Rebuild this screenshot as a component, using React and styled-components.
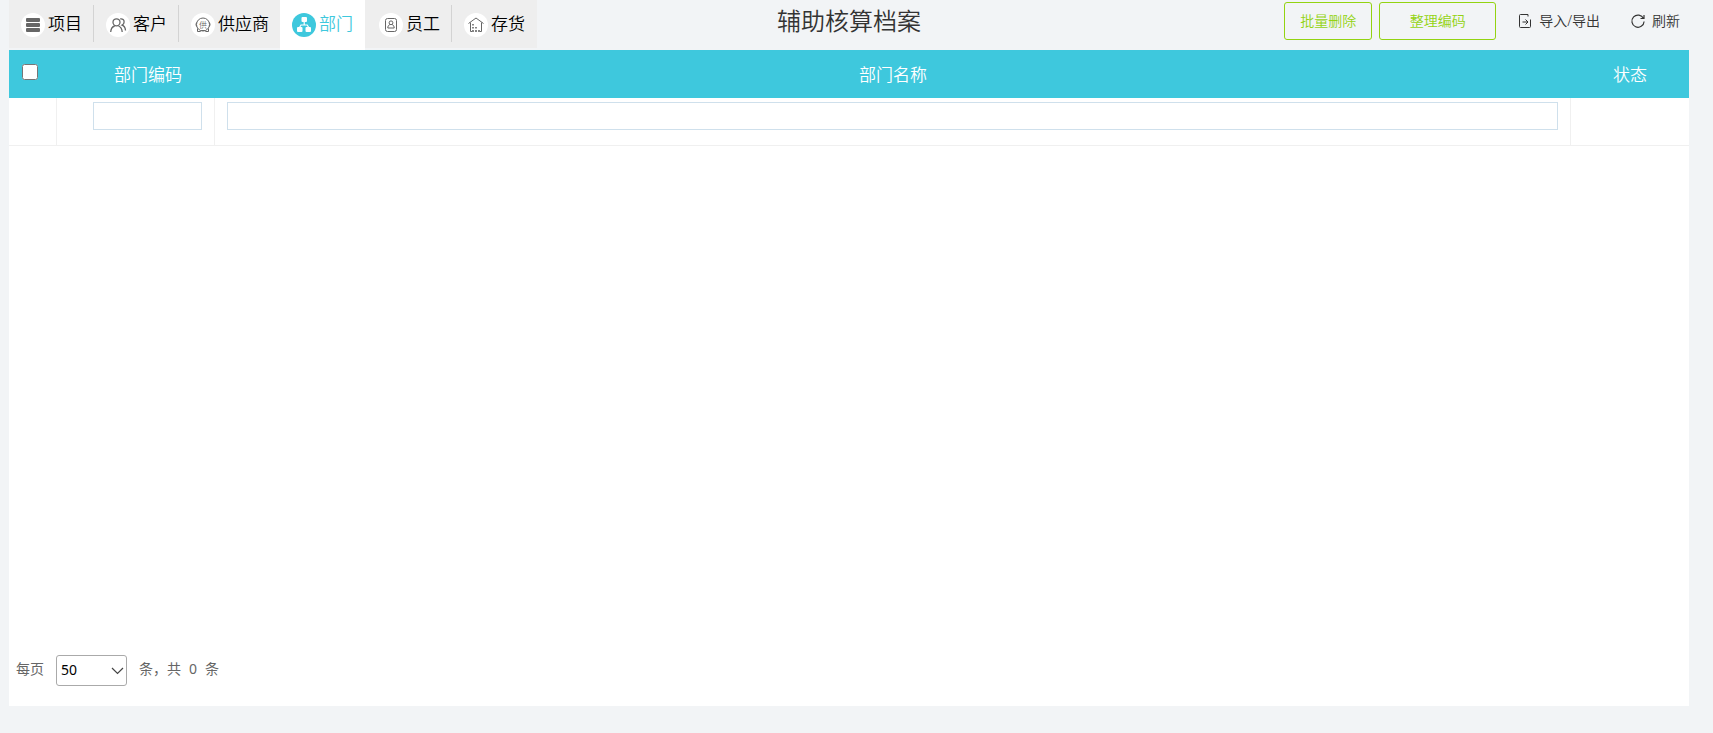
import React, { useState } from "react";
import styled, { createGlobalStyle } from "styled-components";

// Color scheme
const primaryColor = "#3ec8dd";
const accentColor = "#93d311";
const pageColor = "#f2f4f6";
const tabColor = "#eeeeee";
const iconColor = "#666666";

const GlobalStyle = createGlobalStyle`
  * {
    box-sizing: border-box;
  }

  body {
    margin: 0;
    background-color: ${pageColor};
    font-family: "Noto Sans", "Noto Sans CJK SC", sans-serif;
    font-size: 14px;
    font-weight: 350;
    color: #333;
  }

  button, input, select {
    font-family: inherit;
    font-weight: inherit;
  }
`;

// Styled Components
const Page = styled.main`
  display: flex;
  flex-direction: column;
  min-height: 100vh;
  padding: 0 24px 27px 9px;
`;

const Header = styled.header`
  display: grid;
  grid-template-columns: 1fr auto 1fr;
  height: 50px;
`;

const Tabs = styled.div`
  display: flex;
  justify-self: start;
  height: 48px;
  background-color: ${tabColor};
`;

const Tab = styled.button`
  display: flex;
  align-items: center;
  gap: 3px;
  height: ${({ $active }) => ($active ? "50px" : "48px")};
  margin: ${({ $active }) => ($active ? "0 2px 0 -1px" : "0")};
  padding: ${({ $active }) => ($active ? "0 0 2px 12px" : "0 0 0 12px")};
  border: 0;
  background-color: ${({ $active }) => ($active ? "#fff" : tabColor)};
  color: ${({ $active }) => ($active ? primaryColor : "#000")};
  font-size: 17px;
  white-space: nowrap;
  cursor: pointer;
`;

const TabLabel = styled.span`
  line-height: 24px;
`;

const TabDivider = styled.span`
  align-self: flex-start;
  width: 1px;
  height: 37px;
  margin: 5px 0 0 8px;
  background-color: ${({ $visible }) => ($visible ? "#d3d3d3" : "transparent")};
`;

const TabIcon = styled.svg`
  width: 24px;
  height: 24px;
  margin-top: 2px;
  border-radius: 50%;
  background-color: ${({ $active }) => ($active ? primaryColor : "#fff")};
  fill: none;
  stroke: ${iconColor};
`;

const Title = styled.h1`
  margin: 0;
  font-size: 24px;
  font-weight: 350;
  line-height: 42px;
`;

const Actions = styled.div`
  display: flex;
  justify-content: flex-end;
  align-items: center;
  height: 38px;
  margin-top: 2px;
  padding-right: 9px;
`;

const OutlineButton = styled.button`
  width: ${({ $wide }) => ($wide ? "117px" : "88px")};
  height: 38px;
  margin-right: 7px;
  padding: 0 0 2px;
  border: 1px solid ${accentColor};
  border-radius: 3px;
  background: transparent;
  color: ${accentColor};
  font-size: 14px;
  cursor: pointer;
`;

const TextButton = styled.button`
  display: flex;
  align-items: center;
  gap: 6px;
  margin-left: ${({ $spaced }) => ($spaced ? "30px" : "14px")};
  padding: 0 0 2px;
  border: 0;
  background: transparent;
  color: #333;
  font-size: 14px;
  white-space: nowrap;
  cursor: pointer;

  svg {
    width: 16px;
    height: 16px;
    margin-top: 2px;
    fill: none;
    stroke: #333;
  }
`;

const Panel = styled.section`
  display: flex;
  flex: 1;
  flex-direction: column;
  justify-content: space-between;
  background-color: #fff;
`;

const Table = styled.table`
  width: 100%;
  table-layout: fixed;
  border-collapse: separate;
  border-spacing: 0;
`;

const Column = styled.col`
  width: ${({ $width }) => $width};
`;

const HeadCell = styled.th`
  height: 48px;
  padding: ${({ $indent }) => ($indent ? "2px 0 0 24px" : "2px 0 0")};
  background-color: ${primaryColor};
  color: #fff;
  font-size: 17px;
  font-weight: 350;
  line-height: 24px;
`;

const CheckCell = styled(HeadCell)`
  padding: 14px 0 0 13px;
  text-align: left;
  vertical-align: top;
`;

const Checkbox = styled.input`
  display: block;
  width: 16px;
  height: 16px;
  margin: 0;
`;

const FilterCell = styled.td`
  height: 48px;
  padding: ${({ $indent }) => ($indent ? "4px 12px 0 36px" : "4px 12px 0")};
  border-right: 1px solid #f0f0f0;
  border-bottom: 1px solid #f0f0f0;
  vertical-align: top;

  &:last-child {
    border-right: 0;
  }
`;

const FilterInput = styled.input`
  display: block;
  width: 100%;
  height: 28px;
  padding: 0 6px;
  border: 1px solid #cfe0ec;
  background-color: #fff;
  font-size: 14px;
  outline: none;
`;

const Footer = styled.footer`
  display: flex;
  align-items: center;
  gap: 12px;
  padding: 0 7px 20px;
  color: #666;
  font-weight: 400;
  line-height: 20px;
`;

const SizeLabel = styled.label`
  padding-bottom: 4px;
`;

const SelectBox = styled.div`
  position: relative;

  svg {
    position: absolute;
    top: 12px;
    right: 3px;
    width: 13px;
    height: 8px;
    fill: none;
    stroke: #444;
    pointer-events: none;
  }
`;

const Select = styled.select`
  display: block;
  width: 71px;
  height: 31px;
  padding: 0 4px 2px;
  border: 1px solid #aaa;
  border-radius: 3px;
  appearance: none;
  background-color: #fff;
  color: #000;
  font-size: 14px;
`;

const Total = styled.span`
  display: flex;
  gap: 8px;
  padding-bottom: 4px;
`;

// Tab icons, drawn on a 24 unit grid
const icons = {
  project: (
    <g fill={iconColor} stroke="none">
      <rect x="5" y="5" width="14" height="4" rx="1" />
      <rect x="5" y="10" width="14" height="4" rx="1" />
      <rect x="5" y="15" width="14" height="4" rx="1" />
    </g>
  ),
  customer: (
    <g strokeWidth="1.3">
      <circle cx="10.5" cy="9.3" r="3.5" />
      <path d="M4.7 19c.2-3.3 1.8-5.4 4-6M12.5 13c2.1.8 3.5 2.8 3.7 6M14.2 5.9c2.5-.5 4 1.1 3.9 3.1 0 1.5-.8 2.6-2 3.2 2 .7 3.2 2.4 3.4 5.3" />
    </g>
  ),
  supplier: (
    <>
      <circle cx="12" cy="11.5" r="6.5" />
      <path d="M6.5 15.5v3H9l1.500-1h3l1.500 1h2.500v-3M5.500 9.500l-.5 2 .5 2M18.500 9.500l.5 2-.5 2" />
      <text x="12" y="14.500" fontSize="8" textAnchor="middle" fill={iconColor} stroke="none">
        供
      </text>
    </>
  ),
  department: (
    <>
      <g fill="#fff" stroke="none">
        <rect x="9.5" y="4" width="5.5" height="5" rx="1" />
        <rect x="5" y="14" width="5.5" height="5" rx="1" />
        <rect x="13.5" y="14" width="5.5" height="5" rx="1" />
      </g>
      <path d="M12.2 9v3M7.5 14.5L9 12h6.2l1.5 2.5" stroke="#fff" strokeWidth="1.2" />
    </>
  ),
  employee: (
    <>
      <rect x="6.5" y="5.5" width="11" height="13" rx="2" />
      <circle cx="12" cy="9.8" r="1.9" />
      <path d="M10.8 11.5c-1.4.8-2 2-2 3.5h6.4c0-1.5-.6-2.7-2-3.5" />
    </>
  ),
  stock: (
    <>
      <path d="M4.5 10.5L12 5l7.5 5.5M6.5 9.5v9H8M17.5 9.5v9H16" />
      <path
        d="M9 11v1.5M9 14v1.5M9 17v2M12 14v1.5M12 17v2M15 17v2"
        strokeWidth="1.6"
      />
    </>
  ),
};

const tabs = [
  { id: "project", label: "项目", divider: true },
  { id: "customer", label: "客户", divider: true },
  { id: "supplier", label: "供应商" },
  { id: "department", label: "部门" },
  { id: "employee", label: "员工", divider: true },
  { id: "stock", label: "存货" },
];

const App = () => {
  const [activeTab, setActiveTab] = useState("department");

  return (
    <Page>
      <GlobalStyle />

      <Header>
        <Tabs role="tablist">
          {tabs.map(({ id, label, divider }) => {
            const active = id === activeTab;
            return (
              <Tab
                key={id}
                type="button"
                role="tab"
                aria-selected={active}
                $active={active}
                onClick={() => setActiveTab(id)}
              >
                <TabIcon viewBox="0 0 24 24" $active={active} aria-hidden="true">
                  {icons[id]}
                </TabIcon>
                <TabLabel>{label}</TabLabel>
                <TabDivider $visible={divider} />
              </Tab>
            );
          })}
        </Tabs>

        <Title>辅助核算档案</Title>

        <Actions>
          <OutlineButton type="button">批量删除</OutlineButton>
          <OutlineButton type="button" $wide>
            整理编码
          </OutlineButton>
          <TextButton type="button">
            <svg viewBox="0 0 16 16" aria-hidden="true">
              <path d="M11 3.5V1.500H3.500q-1 0-1 1v11q0 1 1 1h9q1 0 1-1V6.500M5.500 9H11M8.500 6.500L11 9l-2.500 2.500" />
            </svg>
            导入/导出
          </TextButton>
          <TextButton type="button" $spaced>
            <svg viewBox="0 0 16 16" aria-hidden="true">
              <path d="M13.5 5.5A6.1 6.1 0 1 0 14.1 8.5M14 2v3.5h-3.5" strokeWidth="1.2" />
            </svg>
            刷新
          </TextButton>
        </Actions>
      </Header>

      <Panel>
        <Table>
          <colgroup>
            <Column $width="48px" />
            <Column $width="158px" />
            <Column $width="auto" />
            <Column $width="118px" />
          </colgroup>
          <thead>
            <tr>
              <CheckCell>
                <Checkbox type="checkbox" aria-label="全选" />
              </CheckCell>
              <HeadCell $indent>部门编码</HeadCell>
              <HeadCell>部门名称</HeadCell>
              <HeadCell>状态</HeadCell>
            </tr>
          </thead>
          <tbody>
            <tr>
              <FilterCell />
              <FilterCell $indent>
                <FilterInput type="text" aria-label="部门编码" />
              </FilterCell>
              <FilterCell>
                <FilterInput type="text" aria-label="部门名称" />
              </FilterCell>
              <FilterCell />
            </tr>
          </tbody>
        </Table>

        <Footer>
          <SizeLabel htmlFor="page-size">每页</SizeLabel>
          <SelectBox>
            <Select id="page-size" defaultValue="50">
              <option value="20">20</option>
              <option value="50">50</option>
              <option value="100">100</option>
            </Select>
            <svg viewBox="0 0 13 8" aria-hidden="true">
              <path d="M1 1l5.5 5.5L12 1" strokeWidth="1.2" />
            </svg>
          </SelectBox>
          <Total>
            <span>条，共</span>
            <span>0</span>
            <span>条</span>
          </Total>
        </Footer>
      </Panel>
    </Page>
  );
};

export default App;
